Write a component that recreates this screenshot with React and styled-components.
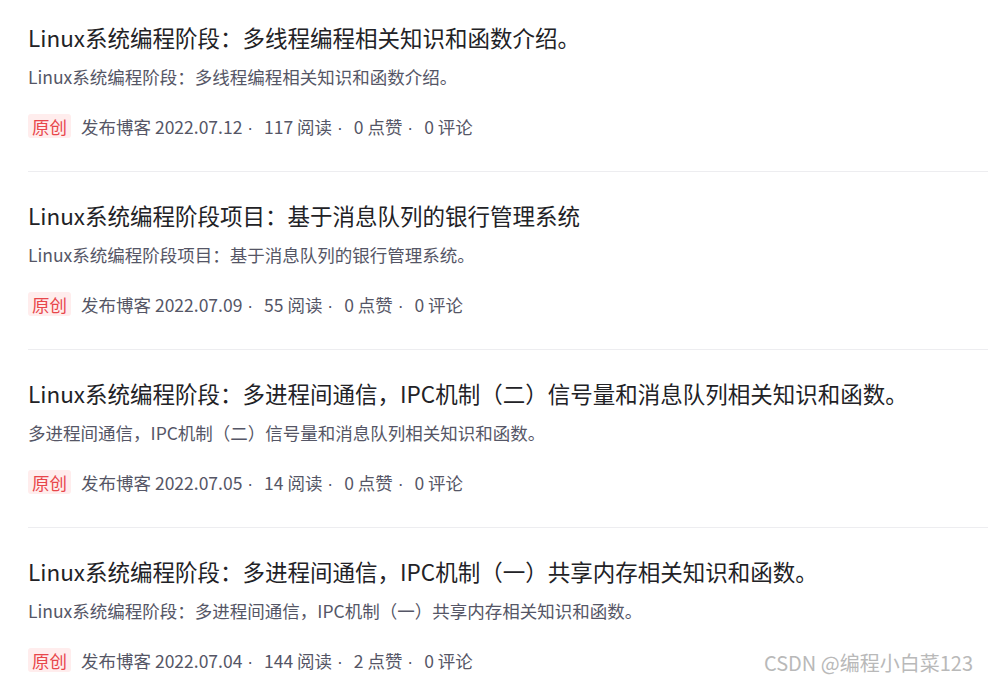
import React from "react";
import styled, { createGlobalStyle } from "styled-components";

const GlobalStyle = createGlobalStyle`
    html, body {
        margin: 0;
        padding: 0;
        background: #ffffff;
    }
    body {
        font-family: "Noto Sans CJK SC", "Liberation Sans", sans-serif;
        overflow: hidden;
    }
`;

const Page = styled.div`
    position: relative;
    width: 988px;
    height: 683px;
    overflow: hidden;
`;

const List = styled.ul`
    list-style: none;
    margin: 0;
    padding: 0 0 0 28px;
`;

const Item = styled.li`
    display: flex;
    flex-direction: column;
    padding: 28px 0 33px;
    border-bottom: 1px solid #ededf0;

    &:first-child {
        padding-top: 22px;
    }
`;

const Title = styled.h4`
    margin: 0;
    font-size: 22.5px;
    line-height: 30px;
    font-weight: 400;
    color: #222226;
    white-space: nowrap;
`;

const Desc = styled.p`
    margin: 13px 0 0;
    font-size: 17.5px;
    line-height: 24px;
    color: #555666;
    white-space: nowrap;
`;

const Meta = styled.div`
    display: flex;
    align-items: center;
    margin-top: 25px;
    height: 24px;
    font-size: 17.5px;
    color: #555666;
    white-space: nowrap;
`;

const Tag = styled.span`
    display: inline-flex;
    align-items: center;
    height: 24px;
    padding: 0 4px;
    margin-right: 10px;
    border-radius: 3px;
    background: #ffeded;
    color: #e8464a;
    font-size: 17.5px;
`;

const MetaPart = styled.span`
    margin-right: 11px;
`;

const Dot = styled.span`
    font-family: "Liberation Sans", sans-serif;
`;

const Watermark = styled.span`
    position: absolute;
    right: 15px;
    bottom: 8px;
    font-size: 20px;
    line-height: 24px;
    color: #b9b9b9;
    text-shadow: 0 0 1px #ffffff;
`;

const posts = [
    {
        id: 1,
        title: "Linux系统编程阶段：多线程编程相关知识和函数介绍。",
        desc: "Linux系统编程阶段：多线程编程相关知识和函数介绍。",
        date: "2022.07.12",
        reads: 117,
        likes: 0,
        comments: 0,
    },
    {
        id: 2,
        title: "Linux系统编程阶段项目：基于消息队列的银行管理系统",
        desc: "Linux系统编程阶段项目：基于消息队列的银行管理系统。",
        date: "2022.07.09",
        reads: 55,
        likes: 0,
        comments: 0,
    },
    {
        id: 3,
        title: "Linux系统编程阶段：多进程间通信，IPC机制（二）信号量和消息队列相关知识和函数。",
        desc: "多进程间通信，IPC机制（二）信号量和消息队列相关知识和函数。",
        date: "2022.07.05",
        reads: 14,
        likes: 0,
        comments: 0,
    },
    {
        id: 4,
        title: "Linux系统编程阶段：多进程间通信，IPC机制（一）共享内存相关知识和函数。",
        desc: "Linux系统编程阶段：多进程间通信，IPC机制（一）共享内存相关知识和函数。",
        date: "2022.07.04",
        reads: 144,
        likes: 2,
        comments: 0,
    },
];

export default function App() {
    return (
        <Page>
            <GlobalStyle />
            <List>
                {posts.map((post) => (
                    <Item key={post.id}>
                        <Title>{post.title}</Title>
                        <Desc>{post.desc}</Desc>
                        <Meta>
                            <Tag>原创</Tag>
                            <MetaPart>发布博客 {post.date}<Dot> ·</Dot></MetaPart>
                            <MetaPart>{post.reads} 阅读<Dot> ·</Dot></MetaPart>
                            <MetaPart>{post.likes} 点赞<Dot> ·</Dot></MetaPart>
                            <MetaPart>{post.comments} 评论</MetaPart>
                        </Meta>
                    </Item>
                ))}
            </List>
            <Watermark>CSDN @编程小白菜123</Watermark>
        </Page>
    );
}
